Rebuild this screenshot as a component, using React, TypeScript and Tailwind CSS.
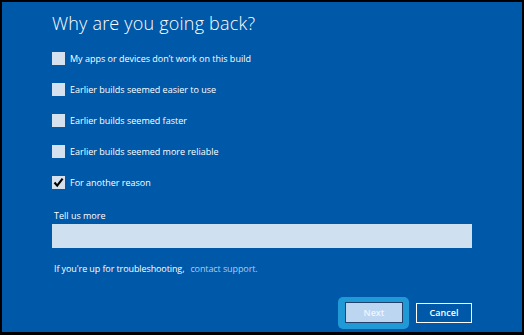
import React from "react";

const reasons = [
  { label: "My apps or devices don\u2019t work on this build", checked: false },
  { label: "Earlier builds seemed easier to use", checked: false },
  { label: "Earlier builds seemed faster", checked: false },
  { label: "Earlier builds seemed more reliable", checked: false },
  { label: "For another reason", checked: true },
];

function Checkbox({ checked }: { checked: boolean }) {
  return (
    <span className="w-[13px] h-[13px] bg-[#d5e1ee] flex items-center justify-center shrink-0">
      {checked && (
        <svg width="11" height="11" viewBox="0 0 11 11">
          <path d="M1.5 5.5 L4.2 8.6 L9.6 1.6" fill="none" stroke="#000" strokeWidth="2.2" />
        </svg>
      )}
    </span>
  );
}

export default function App() {
  return (
    <div
      className="w-[524px] h-[335px] bg-black pt-[2px] pl-[2px] pr-[2px] pb-[3px]"
      style={{ fontFamily: '"Open Sans", "Noto Sans", sans-serif' }}
    >
      <div className="w-full h-full bg-[#0058a9] pl-[50px] pt-[10px] text-white">
        <h1 className="text-[18px] leading-[23px] font-light tracking-[0.2px]">
          Why are you going back?
        </h1>

        <div className="mt-[17px] flex flex-col gap-[18px]">
          {reasons.map((r) => (
            <div key={r.label} className="flex items-center h-[13px] gap-[5px]">
              <Checkbox checked={r.checked} />
              <span className="text-[9px] leading-[13px]">{r.label}</span>
            </div>
          ))}
        </div>

        <div className="mt-[21px] pl-[2px] text-[9px] leading-[12px]">Tell us more</div>
        <div className="mt-[2px] w-[420px] h-[24px] bg-[#cfe0f0]" />

        <div className="mt-[14px] pl-[2px] text-[9px] leading-[13px] flex tracking-[-0.1px]">
          <span>If you&apos;re up for troubleshooting,</span>
          <span className="ml-[6px] text-[#a9cbef]">contact support.</span>
        </div>

        <div className="mt-[22px] w-[420px] flex justify-end items-center gap-[7px]">
          <div className="rounded-[5px] bg-[#1f9ad7] pt-[5px] pb-[6px] pl-[7px] pr-[6px]">
            <div className="w-[58px] h-[21px] bg-[#bcd6f2] border border-[#23406a] flex items-center justify-center text-[9px] font-semibold text-[#eef5fc]">
              Next
            </div>
          </div>
          <div className="w-[56px] h-[20px] border border-white flex items-center justify-center text-[9px] font-semibold">
            Cancel
          </div>
        </div>
      </div>
    </div>
  );
}
